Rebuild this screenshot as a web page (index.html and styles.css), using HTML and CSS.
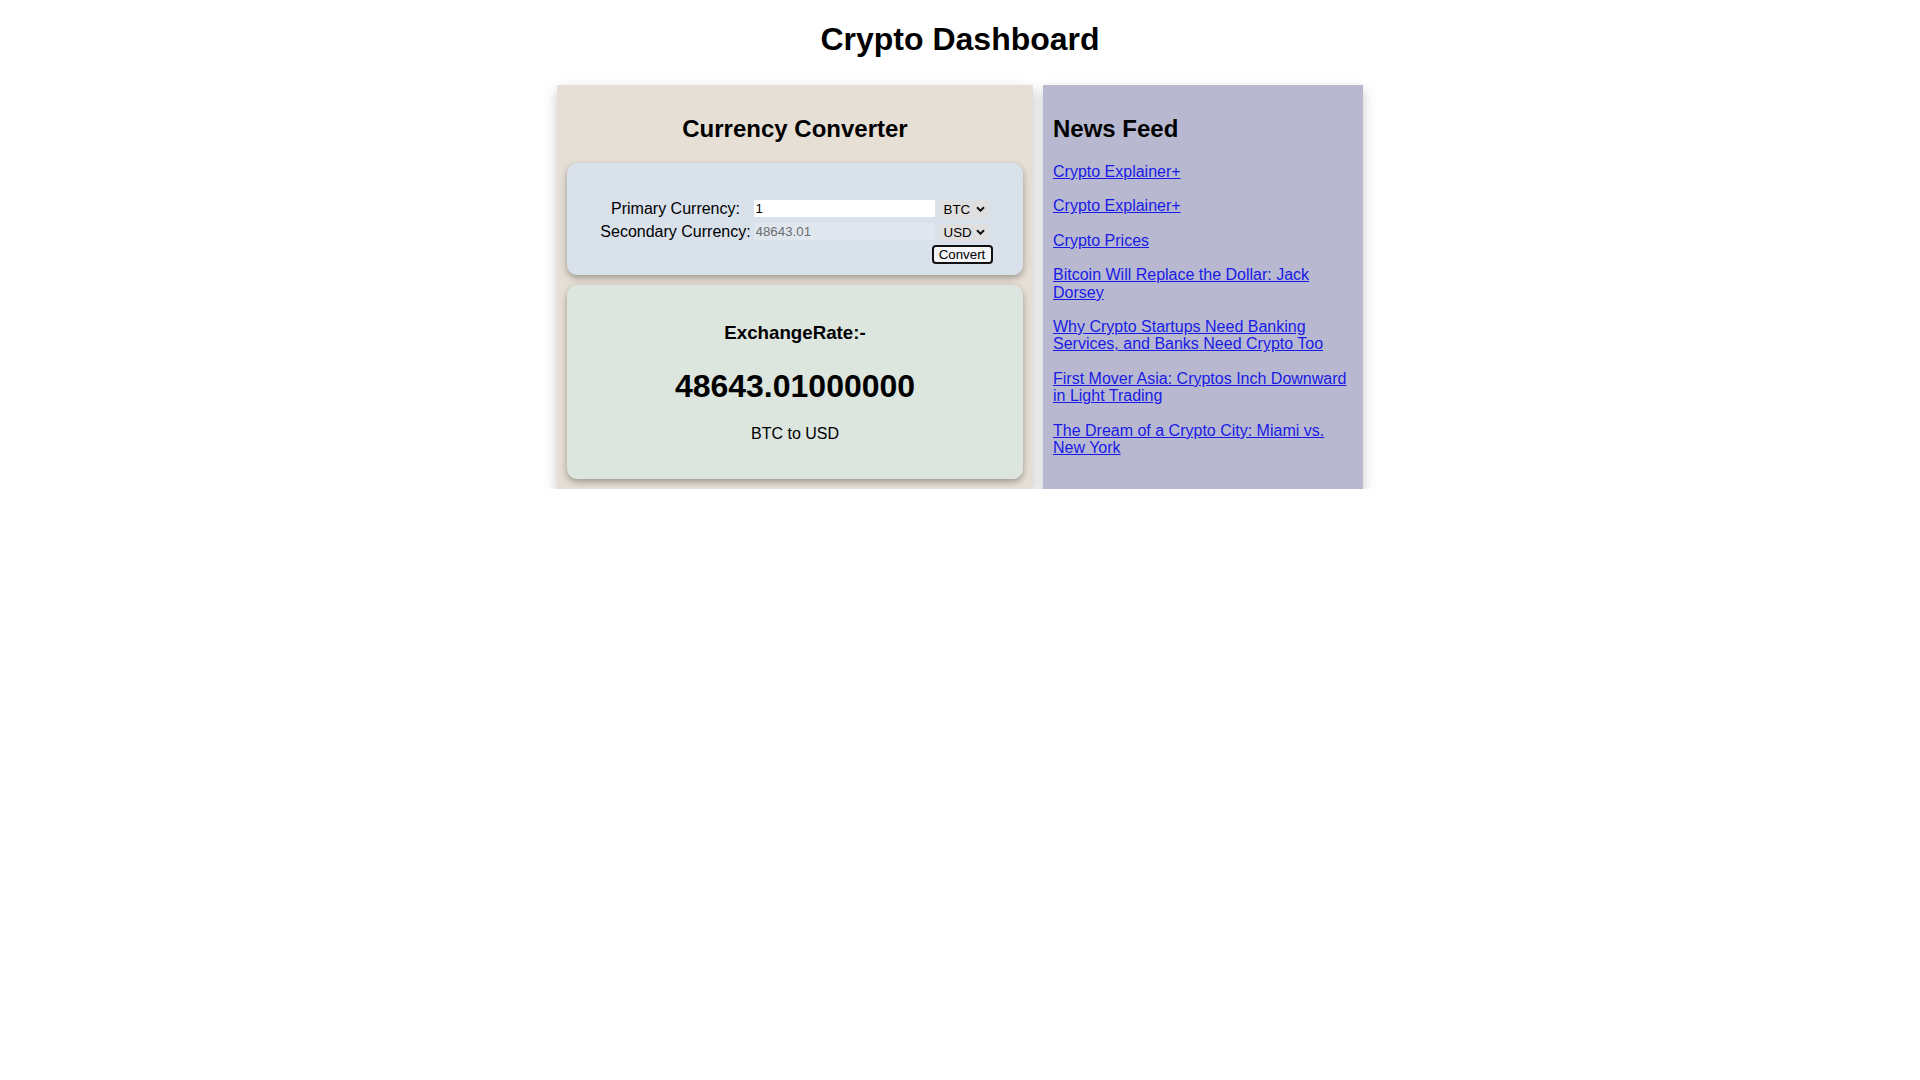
FILE: index.html
```html
<!DOCTYPE html>
<html lang="en">
<head>
<meta charset="utf-8">
<title>Crypto Dashboard</title>
<link rel="stylesheet" href="styles.css">
</head>
<body>
<h1 class="title">Crypto Dashboard</h1>
<main class="dashboard">
  <section class="converter-panel">
    <h2 class="panel-heading center">Currency Converter</h2>
    <div class="card converter-card">
      <div class="converter-grid">
        <label class="field-label" for="primary">Primary Currency:</label>
        <input class="amount" id="primary" type="number" value="1">
        <span class="select-wrap">
          <select class="currency" aria-label="Primary currency"><option>BTC</option><option>ETH</option><option>USD</option></select>
          <svg class="chev" viewBox="0 0 9 6" width="9" height="6" aria-hidden="true"><path d="M1 1.2 L4.5 4.7 L8 1.2" fill="none" stroke="#111" stroke-width="2"/></svg>
        </span>
        <label class="field-label" for="secondary">Secondary Currency:</label>
        <input class="amount result" id="secondary" type="text" value="48643.01" readonly>
        <span class="select-wrap">
          <select class="currency" aria-label="Secondary currency"><option>USD</option><option>BTC</option><option>ETH</option></select>
          <svg class="chev" viewBox="0 0 9 6" width="9" height="6" aria-hidden="true"><path d="M1 1.2 L4.5 4.7 L8 1.2" fill="none" stroke="#111" stroke-width="2"/></svg>
        </span>
        <button class="convert" type="button">Convert</button>
      </div>
    </div>
    <div class="card rate-card">
      <h3 class="rate-label">ExchangeRate:-</h3>
      <h1 class="rate-value">48643.01000000</h1>
      <p class="rate-pair">BTC to USD</p>
    </div>
  </section>
  <section class="news-panel">
    <h2 class="panel-heading">News Feed</h2>
    <p class="news-item"><a href="#">Crypto Explainer+</a></p>
    <p class="news-item"><a href="#">Crypto Explainer+</a></p>
    <p class="news-item"><a href="#">Crypto Prices</a></p>
    <p class="news-item"><a href="#">Bitcoin Will Replace the Dollar: Jack Dorsey</a></p>
    <p class="news-item"><a href="#">Why Crypto Startups Need Banking Services, and Banks Need Crypto Too</a></p>
    <p class="news-item"><a href="#">First Mover Asia: Cryptos Inch Downward in Light Trading</a></p>
    <p class="news-item"><a href="#">The Dream of a Crypto City: Miami vs. New York</a></p>
  </section>
</main>
</body>
</html>
```

FILE: styles.css
```css
body {
  margin: 0;
  font-family: "Liberation Sans", Arial, sans-serif;
  color: #000;
  background: #fff;
}

.title {
  margin: 21px 0 27px;
  font-size: 32px;
  line-height: 37px;
  font-weight: bold;
  text-align: center;
}

.dashboard {
  display: flex;
  justify-content: center;
  align-items: stretch;
  gap: 10px;
}

.converter-panel {
  box-sizing: border-box;
  width: 476px;
  padding: 10px;
  background: #e6dfd5;
  box-shadow: 0 5px 12px rgba(0, 0, 0, 0.22);
}

.news-panel {
  box-sizing: border-box;
  width: 320px;
  padding: 10px;
  background: #b8b9d1;
  box-shadow: 0 5px 12px rgba(0, 0, 0, 0.22);
}

.panel-heading {
  margin: 20px 0;
  font-size: 24px;
  line-height: 28px;
  font-weight: bold;
}

.center {
  text-align: center;
}

.card {
  border-radius: 10px;
  box-shadow: 0 3px 7px rgba(0, 0, 0, 0.32);
}

.converter-card {
  background: #d9e1eb;
  padding: 35px 0 10px;
  display: flex;
  justify-content: center;
}

.converter-grid {
  display: grid;
  grid-template-columns: 152px 181px 54px;
  grid-auto-rows: 21px;
  column-gap: 2px;
  row-gap: 2px;
  align-items: center;
}

.field-label {
  font-size: 16px;
  text-align: center;
  white-space: nowrap;
}

.amount {
  box-sizing: border-box;
  width: 181px;
  height: 17px;
  border: none;
  padding: 0 2px;
  margin: 0;
  font-family: "Liberation Sans", Arial, sans-serif;
  font-size: 13.33px;
  color: #000;
  background: #fff;
  outline: none;
  -moz-appearance: textfield;
}

.amount::-webkit-outer-spin-button,
.amount::-webkit-inner-spin-button {
  -webkit-appearance: none;
  margin: 0;
}

.result {
  background: #e1e7ef;
  color: #6d6d6d;
}

.select-wrap {
  position: relative;
  justify-self: center;
  width: 50px;
  height: 17px;
}

.currency {
  -webkit-appearance: none;
  appearance: none;
  box-sizing: border-box;
  width: 50px;
  height: 17px;
  margin: 0;
  border: none;
  border-radius: 0;
  padding: 0 0 0 5px;
  font-family: "Liberation Sans", Arial, sans-serif;
  font-size: 13.33px;
  line-height: 17px;
  color: #000;
  background: #dfdfdf;
}

.chev {
  position: absolute;
  right: 4px;
  top: 6px;
  pointer-events: none;
}

.convert {
  grid-column: 3;
  justify-self: end;
  margin-right: -2px;
  box-sizing: border-box;
  width: 61px;
  height: 19px;
  padding: 0;
  border: 2px solid #111;
  border-radius: 4px;
  background: #f3f5f8;
  font-family: "Liberation Sans", Arial, sans-serif;
  font-size: 13.33px;
  line-height: 15px;
  color: #000;
}

.rate-card {
  margin-top: 10px;
  background: #dce5de;
  display: flex;
  flex-direction: column;
  align-items: center;
  height: 194px;
  box-sizing: border-box;
}

.rate-label {
  margin: 37px 0 0;
  font-size: 18.72px;
  line-height: 22px;
  font-weight: bold;
}

.rate-value {
  margin: 24px 0 0;
  font-size: 32px;
  line-height: 37px;
  font-weight: bold;
}

.rate-pair {
  margin: 20px 0 0;
  font-size: 16px;
  line-height: 18px;
}

.news-item {
  margin: 17px 0;
  font-size: 16px;
  line-height: 17.4px;
}

.news-item a {
  color: #1a1ae6;
  text-decoration: underline;
}
```
